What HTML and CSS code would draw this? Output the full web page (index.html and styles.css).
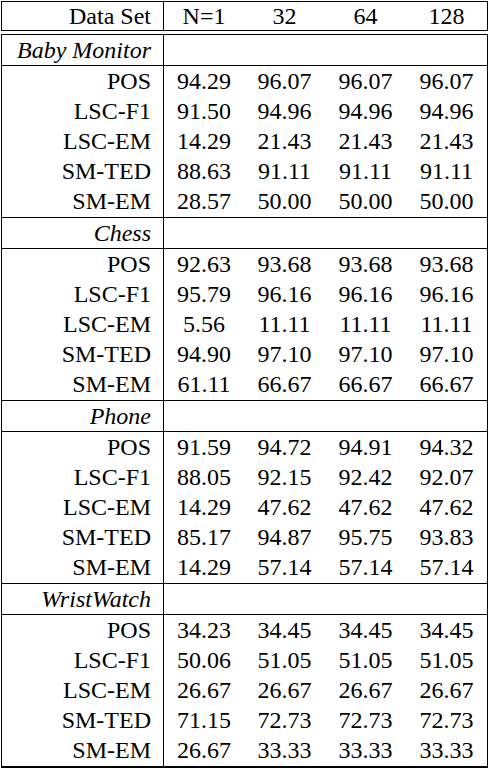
FILE: index.html
```html
<!DOCTYPE html>
<html lang="en">
<head>
    <meta charset="UTF-8">
    <meta name="viewport" content="width=device-width, initial-scale=1.0">
    <title>Results by Data Set</title>
    <link rel="stylesheet" href="styles.css">
</head>
<body>
    <table class="results head">
        <colgroup>
            <col class="c-name"><col class="c-num"><col class="c-num2"><col class="c-num2"><col class="c-num2">
        </colgroup>
        <tr>
            <th class="name">Data Set</th>
            <th>N=1</th>
            <th>32</th>
            <th>64</th>
            <th>128</th>
        </tr>
    </table>

    <table class="results body">
        <colgroup>
            <col class="c-name"><col class="c-num"><col class="c-num2"><col class="c-num2"><col class="c-num2">
        </colgroup>

        <tr class="group first"><td class="name">Baby Monitor</td><td></td><td></td><td></td><td></td></tr>
        <tr><td class="name">POS</td><td>94.29</td><td>96.07</td><td>96.07</td><td>96.07</td></tr>
        <tr><td class="name">LSC-F1</td><td>91.50</td><td>94.96</td><td>94.96</td><td>94.96</td></tr>
        <tr><td class="name">LSC-EM</td><td>14.29</td><td>21.43</td><td>21.43</td><td>21.43</td></tr>
        <tr><td class="name">SM-TED</td><td>88.63</td><td>91.11</td><td>91.11</td><td>91.11</td></tr>
        <tr class="last"><td class="name">SM-EM</td><td>28.57</td><td>50.00</td><td>50.00</td><td>50.00</td></tr>

        <tr class="group"><td class="name">Chess</td><td></td><td></td><td></td><td></td></tr>
        <tr><td class="name">POS</td><td>92.63</td><td>93.68</td><td>93.68</td><td>93.68</td></tr>
        <tr><td class="name">LSC-F1</td><td>95.79</td><td>96.16</td><td>96.16</td><td>96.16</td></tr>
        <tr><td class="name">LSC-EM</td><td>5.56</td><td>11.11</td><td>11.11</td><td>11.11</td></tr>
        <tr><td class="name">SM-TED</td><td>94.90</td><td>97.10</td><td>97.10</td><td>97.10</td></tr>
        <tr class="last"><td class="name">SM-EM</td><td>61.11</td><td>66.67</td><td>66.67</td><td>66.67</td></tr>

        <tr class="group"><td class="name">Phone</td><td></td><td></td><td></td><td></td></tr>
        <tr><td class="name">POS</td><td>91.59</td><td>94.72</td><td>94.91</td><td>94.32</td></tr>
        <tr><td class="name">LSC-F1</td><td>88.05</td><td>92.15</td><td>92.42</td><td>92.07</td></tr>
        <tr><td class="name">LSC-EM</td><td>14.29</td><td>47.62</td><td>47.62</td><td>47.62</td></tr>
        <tr><td class="name">SM-TED</td><td>85.17</td><td>94.87</td><td>95.75</td><td>93.83</td></tr>
        <tr class="last"><td class="name">SM-EM</td><td>14.29</td><td>57.14</td><td>57.14</td><td>57.14</td></tr>

        <tr class="group"><td class="name">WristWatch</td><td></td><td></td><td></td><td></td></tr>
        <tr><td class="name">POS</td><td>34.23</td><td>34.45</td><td>34.45</td><td>34.45</td></tr>
        <tr><td class="name">LSC-F1</td><td>50.06</td><td>51.05</td><td>51.05</td><td>51.05</td></tr>
        <tr><td class="name">LSC-EM</td><td>26.67</td><td>26.67</td><td>26.67</td><td>26.67</td></tr>
        <tr><td class="name">SM-TED</td><td>71.15</td><td>72.73</td><td>72.73</td><td>72.73</td></tr>
        <tr class="last"><td class="name">SM-EM</td><td>26.67</td><td>33.33</td><td>33.33</td><td>33.33</td></tr>
    </table>
</body>
</html>
```

FILE: styles.css
```css
* {
  box-sizing: border-box;
  margin: 0;
}

body {
  background-color: #fff;
  padding: 1px 0 0 1px;
  font-family: "Liberation Serif", "Times New Roman", serif;
  font-size: 24px;
  color: #000;
}

.results {
  width: 487px;
  table-layout: fixed;
  border-collapse: separate;
  border-spacing: 0;
  border: 1px solid #000;
}

.c-name {
  width: 162px;
}

.c-num {
  width: 80px;
}

.c-num2 {
  width: 81px;
}

.results th,
.results td {
  padding: 0;
  text-align: center;
  font-weight: normal;
  white-space: nowrap;
  height: 30px;
  line-height: 30px;
}

.results .name {
  text-align: right;
  padding-right: 12px;
  border-right: 1px solid #000;
}

/* header block, then a small gap for the double rule */
.head {
  margin-bottom: 3px;
}

.head th {
  height: 28px;
  line-height: 28px;
}

.body {
  border-bottom-width: 2px;
}

.group td {
  height: 32px;
  border-top: 1px solid #000;
  border-bottom: 1px solid #000;
}

.group.first td {
  height: 31px;
  border-top: none;
}

.group .name {
  font-style: italic;
}

.last td {
  height: 31px;
  line-height: 30px;
  vertical-align: top;
}
```
